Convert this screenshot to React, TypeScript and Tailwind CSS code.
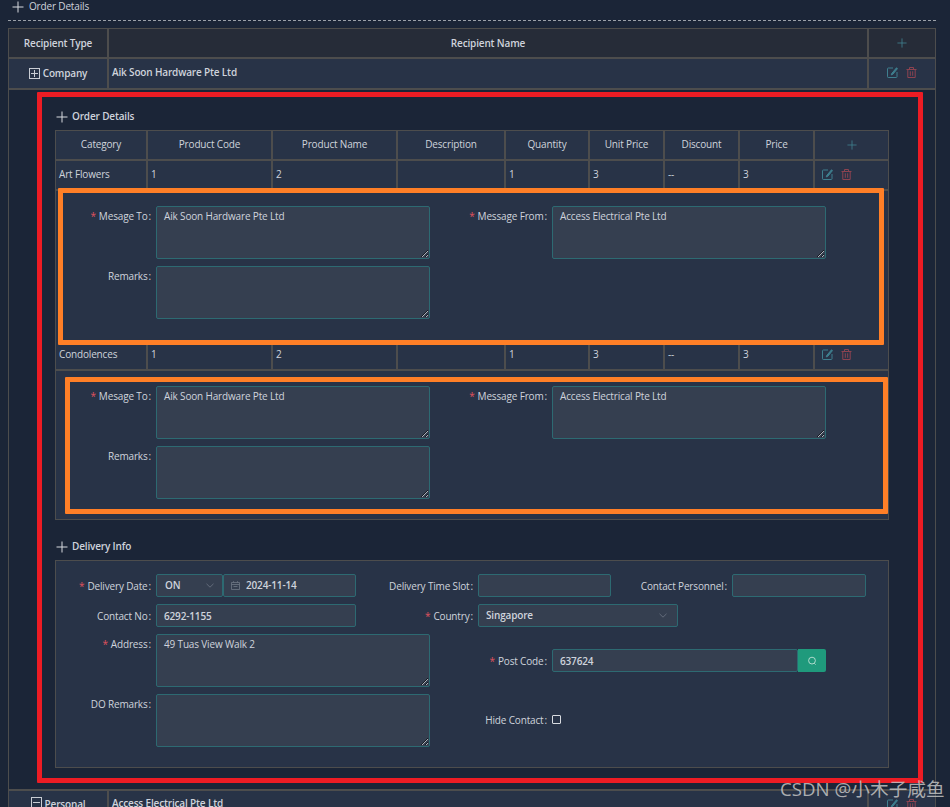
import React from "react";

const PlusIcon = ({ size = 12, color = "#d8dbe0" }: { size?: number; color?: string }) => (
  <svg width={size} height={size} viewBox="0 0 12 12" fill="none" stroke={color} strokeWidth="1" className="shrink-0">
    <path d="M6 0.5V11.5M0.5 6H11.5" />
  </svg>
);

const BoxIcon = ({ minus }: { minus?: boolean }) => (
  <svg width="11" height="11" viewBox="0 0 11 11" fill="none" stroke="#c9cdd4" strokeWidth="1" className="shrink-0">
    <rect x="0.5" y="0.5" width="10" height="10" />
    <path d={minus ? "M2 5.5H9" : "M2 5.5H9M5.5 2V9"} />
  </svg>
);

const EditIcon = () => (
  <svg width="11" height="11" viewBox="0 0 11 11" fill="none" stroke="#3f7f8f" strokeWidth="1">
    <path d="M6 1H1.2C.8 1 .5 1.3.5 1.7V9.8C.5 10.2.8 10.5 1.2 10.5H9.3C9.7 10.5 10 10.2 10 9.8V5" />
    <path d="M4.5 6.8 9.5.8 10.5 1.6 5.6 7.5 4.3 7.9Z" fill="#3f7f8f" />
  </svg>
);

const TrashIcon = () => (
  <svg width="11" height="11" viewBox="0 0 11 11" fill="none" stroke="#8d4350" strokeWidth="1">
    <path d="M.5 2.5H10.5M3.5 2.5V.5H7.5V2.5M1.8 2.5V10.5H9.2V2.5M4.3 4.3V8.8M6.7 4.3V8.8" />
  </svg>
);

const Actions = ({ left }: { left?: boolean }) => (
  <div className={`flex items-center gap-[8px] ${left ? "pl-[7px]" : "justify-center"}`}>
    <EditIcon />
    <TrashIcon />
  </div>
);

const Chevron = () => (
  <svg width="8" height="5" viewBox="0 0 8 5" fill="none" stroke="#6f7785" strokeWidth="0.8">
    <path d="M.5.8 4 4.2 7.5.8" />
  </svg>
);

const Label = ({ w, req, children }: { w: string; req?: boolean; children: React.ReactNode }) => (
  <div className={`${w} shrink-0 text-right text-[10px] leading-[14px] text-[#cfd3dc] whitespace-nowrap`}>
    {req && <span className="text-[#e0525e] mr-[3px]">*</span>}
    {children}
    <span className="ml-[1px]">:</span>
  </div>
);

const Area = ({ value = "" }: { value?: string }) => (
  <textarea
    readOnly
    defaultValue={value}
    className="block w-[274px] h-[53px] rounded-[2px] border border-[#2d6a72] bg-[#353f50] px-[7px] pt-[2px] text-[10px] leading-[14px] tracking-[-0.16px] text-[#cfd3dc] outline-none"
  />
);

const Field = ({ w, value = "", bold }: { w: string; value?: string; bold?: boolean }) => (
  <input
    readOnly
    defaultValue={value}
    className={`block ${w} h-[23px] rounded-[2px] border border-[#2d6a72] bg-[#353f50] px-[7px] text-[10px] tracking-[-0.16px] text-[#cfd3dc] outline-none ${bold ? "font-semibold" : ""}`}
  />
);

const MessagePanel = ({ last }: { last?: boolean }) => (
  <div className={`flex flex-col gap-[7px] pl-[5px] pt-[15px] ${last ? "h-[148px]" : "h-[150px]"}`}>
    <div className="flex">
      <div className="flex w-[369px] gap-[5px]">
        <Label w="w-[90px] pt-[3px]" req>Mesage To</Label>
        <Area value="Aik Soon Hardware Pte Ltd" />
      </div>
      <div className="flex gap-[5px]">
        <Label w="w-[117px] pt-[3px]" req>Message From</Label>
        <Area value="Access Electrical Pte Ltd" />
      </div>
    </div>
    <div className="flex gap-[5px]">
      <Label w="w-[90px] pt-[3px]">Remarks</Label>
      <Area />
    </div>
  </div>
);

const innerCols = [
  "w-[92px]",
  "w-[125px]",
  "w-[125px]",
  "w-[108px]",
  "w-[84px]",
  "w-[75px]",
  "w-[75px]",
  "w-[75px]",
];

const InnerRow = ({ cells }: { cells: string[] }) => (
  <div className="flex h-[30px] border-b-2 border-[#4d4d4d] bg-[#283347] pb-[1px] text-[10px] text-[#cfd3dc]">
    {cells.map((c, i) => (
      <div key={i} className={`${innerCols[i]} -mb-[1px] shrink-0 flex items-center border-r-2 border-[#4d4d4d] pb-[1px] pl-[3px] whitespace-nowrap`}>
        {c}
      </div>
    ))}
    <div className="flex-1 flex items-center">
      <Actions left />
    </div>
  </div>
);

const headers = ["Category", "Product Code", "Product Name", "Description", "Quantity", "Unit Price", "Discount", "Price"];

export default function App() {
  return (
    <div
      className="relative w-[950px] h-[807px] overflow-hidden bg-[#1b2537] text-[#cfd3dc] tracking-[-0.16px]"
      style={{ fontFamily: '"Open Sans", "Noto Sans", "Noto Sans CJK SC", sans-serif' }}
    >
      <div className="flex h-[13px] items-center gap-[5px] pl-[12px] text-[10px]">
        <PlusIcon />
        <span>Order Details</span>
      </div>
      <div className="ml-[8px] mr-[14px] mt-[7px] border-t border-dashed border-[#9aa0a8]" />

      <div className="ml-[8px] mr-[14px] mt-[7px] border-x border-t border-[#4d4d4d]">
        {/* Recipient header */}
        <div className="flex h-[30px] border-b-2 border-[#4d4d4d] bg-[#262c38] text-[10px] font-semibold">
          <div className="w-[100px] shrink-0 flex items-center justify-center border-r-2 border-[#4d4d4d]">Recipient Type</div>
          <div className="flex-1 flex items-center justify-center border-r-2 border-[#4d4d4d]">Recipient Name</div>
          <div className="w-[66px] shrink-0 flex items-center justify-center"><PlusIcon size={10} color="#3f7f8f" /></div>
        </div>
        {/* Company row */}
        <div className="flex h-[31px] border-b-2 border-[#4d4d4d] bg-[#283347] text-[10px] font-semibold">
          <div className="w-[100px] shrink-0 flex items-center justify-center gap-[3px] border-r-2 border-[#4d4d4d] pb-[1px]">
            <BoxIcon />
            <span>Company</span>
          </div>
          <div className="flex-1 flex items-center border-r-2 border-[#4d4d4d] pl-[3px] pb-[3px]">Aik Soon Hardware Pte Ltd</div>
          <div className="w-[66px] shrink-0 flex items-center justify-center pb-[3px]"><Actions /></div>
        </div>

        {/* Expanded */}
        <div className="h-[699px] px-[46px] pt-[20px]">
          <div className="flex h-[13px] items-center gap-[4px] pl-[1px] text-[10px] font-semibold">
            <PlusIcon />
            <span>Order Details</span>
          </div>
          <div className="mt-[7px] border-x border-t border-[#4d4d4d] bg-[#283347]">
            <div className="flex h-[30px] border-b-2 border-[#4d4d4d] text-[10px] text-[#cfd3dc]">
              {headers.map((h, i) => (
                <div key={h} className={`${innerCols[i]} shrink-0 flex items-center justify-center border-r-2 border-[#4d4d4d] pb-[1px]`}>
                  {h}
                </div>
              ))}
              <div className="flex-1 flex items-center justify-center pb-[1px]"><PlusIcon size={10} color="#3f7f8f" /></div>
            </div>
            <InnerRow cells={["Art Flowers", "1", "2", "", "1", "3", "--", "3"]} />
            <MessagePanel />
            <InnerRow cells={["Condolences", "1", "2", "", "1", "3", "--", "3"]} />
            <MessagePanel last />
            <div className="border-b border-[#4d4d4d]" />
          </div>

          <div className="mt-[20px] flex h-[13px] items-center gap-[4px] pl-[1px] text-[10px] font-semibold">
            <PlusIcon />
            <span>Delivery Info</span>
          </div>
          <div className="mt-[7px] h-[208px] border border-[#4d4d4d] bg-[#283347] pl-[5px] pt-[13px]">
            <div className="flex h-[23px] items-center">
              <Label w="w-[90px]" req>Delivery Date</Label>
              <div className="ml-[5px] flex">
                <div className="flex h-[23px] w-[67px] items-center justify-between rounded-[2px] border border-[#2d6a72] bg-[#353f50] pl-[8px] pr-[8px] text-[10px] font-semibold">
                  ON <Chevron />
                </div>
                <div className="flex h-[23px] w-[133px] items-center gap-[6px] rounded-[2px] border border-[#2d6a72] bg-[#353f50] pl-[7px] text-[10px] font-semibold">
                  <svg width="9" height="9" viewBox="0 0 9 9" fill="none" stroke="#6f7785" strokeWidth="0.8">
                    <path d="M.5 1.5H8.5V8.5H.5ZM.5 3.5H8.5M2.5.2V1.5M6.5.2V1.5M2.5 5.5H6.5" />
                  </svg>
                  2024-11-14
                </div>
              </div>
              <Label w="w-[117px]">Delivery Time Slot</Label>
              <div className="ml-[5px]"><Field w="w-[133px]" /></div>
              <Label w="w-[116px]">Contact Personnel</Label>
              <div className="ml-[5px]"><Field w="w-[134px]" /></div>
            </div>
            <div className="mt-[7px] flex h-[23px] items-center">
              <Label w="w-[90px]">Contact No</Label>
              <div className="ml-[5px]"><Field w="w-[200px]" value="6292-1155" bold /></div>
              <Label w="w-[117px]" req>Country</Label>
              <div className="ml-[5px] flex h-[23px] w-[200px] items-center justify-between rounded-[2px] border border-[#2d6a72] bg-[#353f50] pl-[7px] pr-[10px] text-[10px] font-semibold">
                Singapore <Chevron />
              </div>
            </div>
            <div className="mt-[7px] flex">
              <div className="flex flex-col gap-[7px]">
                <div className="flex gap-[5px]">
                  <Label w="w-[90px] pt-[3px]" req>Address</Label>
                  <Area value="49 Tuas View Walk 2" />
                </div>
                <div className="flex gap-[5px]">
                  <Label w="w-[90px] pt-[3px]">DO Remarks</Label>
                  <Area />
                </div>
              </div>
              <div className="flex flex-col">
                <div className="mt-[15px] flex h-[23px] items-center">
                  <Label w="w-[117px]" req>Post Code</Label>
                  <div className="ml-[5px] flex">
                    <Field w="w-[246px]" value="637624" bold />
                    <div className="flex h-[23px] w-[28px] items-center justify-center rounded-r-[2px] bg-[#1f9a7c]">
                      <svg width="10" height="10" viewBox="0 0 10 10" fill="none" stroke="#cfe8e0" strokeWidth="0.8">
                        <circle cx="5" cy="4.6" r="3.4" />
                        <path d="M7.4 7.4 8.6 8.6" />
                      </svg>
                    </div>
                  </div>
                </div>
                <div className="mt-[36px] flex h-[23px] items-center">
                  <Label w="w-[117px]">Hide Contact</Label>
                  <div className="ml-[5px] h-[9px] w-[9px] rounded-[1px] border border-[#d8dbe0]" />
                </div>
              </div>
            </div>
          </div>
        </div>

        {/* Personal row */}
        <div className="flex h-[30px] border-t-2 border-[#4d4d4d] bg-[#283347] text-[10px] font-semibold">
          <div className="w-[100px] shrink-0 flex items-start justify-center gap-[3px] border-r-2 border-[#4d4d4d] pt-[6px]">
            <BoxIcon minus />
            <span>Personal</span>
          </div>
          <div className="flex-1 border-r-2 border-[#4d4d4d] pl-[3px] pt-[5px]">Access Electrical Pte Ltd</div>
          <div className="w-[66px] shrink-0 pt-[8px]"><Actions /></div>
        </div>
      </div>

      {/* Annotation rectangles drawn over the page */}
      <div className="absolute left-[37px] top-[92px] h-[691px] w-[886px] rounded-[1px] border-[5px] border-[#ed1c24]" />
      <div className="absolute left-[58px] top-[188px] h-[157px] w-[826px] rounded-[1px] border-[5px] border-[#ff7f27]" />
      <div className="absolute left-[65px] top-[377px] h-[137px] w-[823px] rounded-[1px] border-[5px] border-[#ff7f27]" />

      {/* Watermark */}
      <div className="absolute left-[780px] top-[775px] whitespace-nowrap text-[18.7px] tracking-normal text-[#c4c4c4]/85">
        CSDN @小木子咸鱼
      </div>
    </div>
  );
}
